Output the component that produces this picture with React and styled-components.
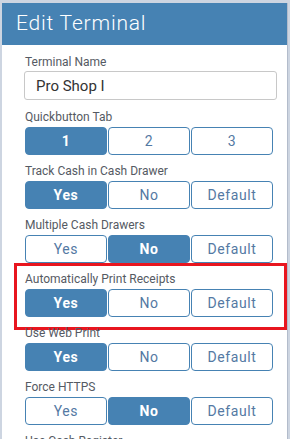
import React from "react"
import styled, { createGlobalStyle } from "styled-components"

const GlobalStyle = createGlobalStyle`
html, body {
  margin:0;
  padding:0;
  background:#cdd5e1;
  overflow:hidden;
}
body {
  font-family:Roboto, "Liberation Sans", Arial, sans-serif;
}
`;

const Page = styled.div`
padding:3px 2px 0 2px;
height:436px;
`;

const Panel = styled.div`
background:#fff;
height:100%;
border-right:1px solid #b3bccb;
box-sizing:border-box;
`;

const Header = styled.div`
height:42px;
background:#4682b3;
color:#fff;
font-size:21px;
font-weight:300;
line-height:40px;
padding-left:14px;
letter-spacing:0.8px;
`;

const Body = styled.div`
padding:10px 0 0 22px;
width:253px;
`;

const Field = styled.div`
position:relative;
margin-bottom:${p => p.$last ? 0 : 9}px;
`;

const Label = styled.div`
font-size:12px;
line-height:14px;
color:#555a63;
margin-bottom:${p => p.$input ? 2 : 3}px;
padding-left:1px;
`;

const TextInput = styled.input`
display:block;
box-sizing:border-box;
width:253px;
height:29px;
border:1px solid #c8c8c8;
border-radius:3px;
padding:0 11px;
font-family:inherit;
font-size:15px;
color:#333;
outline:none;
margin-bottom:10px;
`;

const ButtonRow = styled.div`
display:flex;
gap:1px;
width:248px;
margin-left:1px;
`;

const ChoiceBtn = styled.button`
flex:1;
height:28px;
box-sizing:border-box;
border:1px solid #4682b3;
border-radius:4px;
background:${p => p.$active ? "#4682b3" : "#fff"};
color:${p => p.$active ? "#fff" : "#5479a3"};
font-family:inherit;
font-size:14px;
font-weight:${p => p.$active ? 700 : 400};
letter-spacing:0.6px;
padding:0;
cursor:pointer;
`;

const Highlight = styled.div`
position:absolute;
top:-9px;
left:-10px;
right:-10px;
bottom:-13px;
border:3px solid #e8161f;
pointer-events:none;
`;

const fields = [
    { label: "Quickbutton Tab", options: ["1", "2", "3"], value: 0 },
    { label: "Track Cash in Cash Drawer", options: ["Yes", "No", "Default"], value: 0 },
    { label: "Multiple Cash Drawers", options: ["Yes", "No", "Default"], value: 1 },
    { label: "Automatically Print Receipts", options: ["Yes", "No", "Default"], value: 0, highlight: true },
    { label: "Use Web Print", options: ["Yes", "No", "Default"], value: 0 },
    { label: "Force HTTPS", options: ["Yes", "No", "Default"], value: 1 },
    { label: "Use Cash Register", options: ["Yes", "No", "Default"], value: 1 },
]

const App = () => {
    return (
        <Page>
            <GlobalStyle />
            <Panel>
                <Header>Edit Terminal</Header>
                <Body>
                    <Label $input>Terminal Name</Label>
                    <TextInput defaultValue="Pro Shop I" />
                    {
                        fields.map((f, i) => (
                            <Field key={f.label} $last={i === fields.length - 1}>
                                <Label>{f.label}</Label>
                                <ButtonRow>
                                    {f.options.map((o, j) => (
                                        <ChoiceBtn key={o} $active={j === f.value}>{o}</ChoiceBtn>
                                    ))}
                                </ButtonRow>
                                {f.highlight && <Highlight />}
                            </Field>
                        ))
                    }
                </Body>
            </Panel>
        </Page>
    )
}

export default App;
